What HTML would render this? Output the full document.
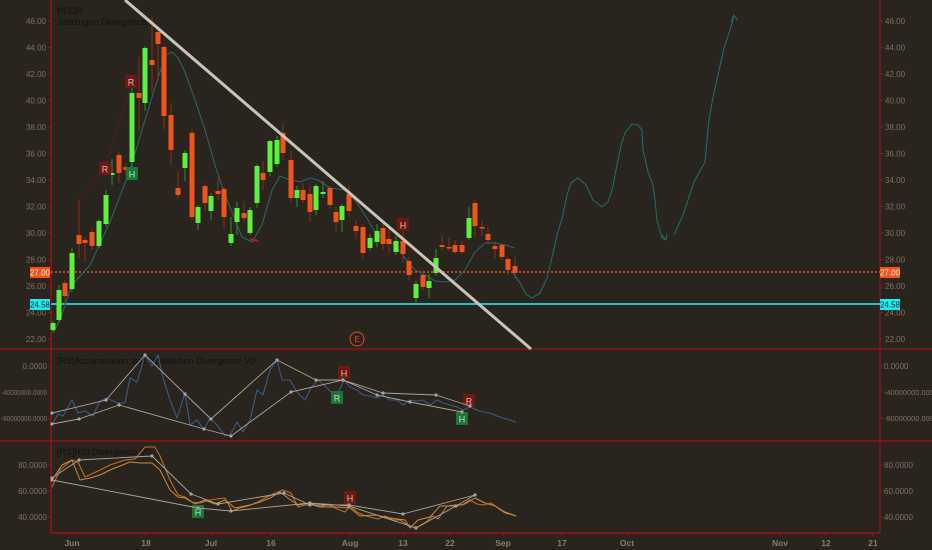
<!DOCTYPE html>
<html><head><meta charset="utf-8"><style>
html,body{margin:0;padding:0;background:#29241e;width:932px;height:550px;overflow:hidden}
svg{display:block}
text{font-family:"Liberation Sans",sans-serif}
</style></head><body>
<svg id="s" width="932" height="550" xmlns="http://www.w3.org/2000/svg">
<rect width="932" height="550" fill="#29241e"/>
<g id="g"></g>
</svg>
<script>
const NS="http://www.w3.org/2000/svg",G=document.getElementById('g');
function el(t,a,txt){const e=document.createElementNS(NS,t);for(const k in a)e.setAttribute(k,a[k]);if(txt!=null)e.textContent=txt;G.appendChild(e);return e;}
function pl(pts,st,w,extra){const a={points:pts.map(p=>p.join(',')).join(' '),fill:'none',stroke:st,'stroke-width':w,'stroke-linejoin':'round'};Object.assign(a,extra||{});return el('polyline',a);}
const AX='#9a1414',TX='#7e7262';
el('line',{x1:51,y1:0,x2:51,y2:533,stroke:AX,'stroke-width':1.5});
el('line',{x1:880,y1:0,x2:880,y2:533,stroke:AX,'stroke-width':1.2});
el('line',{x1:0,y1:349,x2:932,y2:349,stroke:AX,'stroke-width':1.2});
el('line',{x1:0,y1:441,x2:932,y2:441,stroke:AX,'stroke-width':1.2});
el('line',{x1:51,y1:533,x2:880,y2:533,stroke:AX,'stroke-width':1.5});
const pr=[46,44,42,40,38,36,34,32,30,28,26,24,22];
pr.forEach(p=>{const y=21+(46-p)*13.25;
 el('text',{x:46,y:y+3,'font-size':8,fill:TX,'text-anchor':'end'},p.toFixed(2));
 el('text',{x:885,y:y+3,'font-size':8,fill:TX},p.toFixed(2));
 el('line',{x1:48,y1:y,x2:51,y2:y,stroke:AX});el('line',{x1:880,y1:y,x2:883,y2:y,stroke:AX});});
[[366,'0.0000'],[392,'-40000000.0000'],[418,'-80000000.0000'],[465,'80.0000'],[491,'60.0000'],[517,'40.0000']].forEach(([y,t])=>{
 const long=t.length>10;
 el('text',{x:47,y:y+3,'font-size':long?7.4:8,fill:TX,'text-anchor':'end',textLength:long?46:null,lengthAdjust:'spacingAndGlyphs'},t);
 el('text',{x:884,y:y+3,'font-size':long?7.4:8,fill:TX},t);
 el('line',{x1:48,y1:y,x2:51,y2:y,stroke:AX});el('line',{x1:880,y1:y,x2:883,y2:y,stroke:AX});});
document.querySelectorAll('text').forEach(t=>{if(t.getAttribute('textLength')==='null')t.removeAttribute('textLength');});
[['Jun',72],['18',146],['Jul',211],['16',271],['Aug',350],['13',403],['22',450],['Sep',503],['17',562],['Oct',627],['Nov',780],['12',826],['21',873]].forEach(([t,x])=>{
 el('text',{x:x,y:546,'font-size':8.5,fill:'#8e7d62','text-anchor':'middle','font-weight':'bold'},t);
 el('line',{x1:x,y1:533,x2:x,y2:536,stroke:AX});});
el('text',{x:57,y:14,'font-size':9,fill:'#111'},'PDDR');
el('text',{x:57,y:25,'font-size':9,fill:'#111'},'Jeddingen Divergence');
el('text',{x:57,y:364,'font-size':9,fill:'#111'},'[RS]Accumulation and Distribution Divergence V0');
el('text',{x:57,y:455,'font-size':9,fill:'#111'},'[RS]RSI Divergence V0');
el('line',{x1:51,y1:272,x2:880,y2:272,stroke:'#e0541c','stroke-width':1.5,'stroke-dasharray':'2,2'});
el('line',{x1:51,y1:304,x2:880,y2:304,stroke:'#1ec4cc','stroke-width':2});
pl([[53,333],[60,320],[72,285],[90,265],[110,222],[130,170],[145,120],[158,78],[166,55],[172,52],[178,58],[185,72],[195,100],[205,130],[215,165],[225,195],[232,212],[242,237],[252,242],[262,225],[272,190],[280,176],[290,180],[300,182],[310,178],[318,180],[330,188],[345,190],[355,200],[365,215],[375,232],[385,240],[395,245],[405,258],[415,270],[425,275],[435,281],[445,282],[455,280],[465,270],[475,252],[485,243],[495,243],[505,245],[515,248]],'#2a6466',1.1);
el('line',{x1:250,y1:239,x2:258,y2:241,stroke:'#c01818','stroke-width':2});
pl([[79,200],[105,168],[131,85]],'#5a1a14',1);
const O='#f0541c',Gr='#5cf040';
const C=[[53,323,330,Gr,321,332],[59,290,320,Gr,285,322],[65,283,296,O,280,306],[72,253,289,Gr,248,292],[79,235,244,O,200,258],[85,240,243,O,237,262],[92,232,246,O,229,250],[99,221,246,Gr,219,248],[106,195,224,Gr,190,227],[112,173,175,Gr,159,185],[119,155,173,O,152,183],[126,167,170,O,163,175],[132,93,162,Gr,88,168],[139,93,98,O,57,132],[145,48,103,Gr,46,111],[152,60,65,O,17,93],[158,32,44,O,29,81],[164,47,116,O,45,129],[171,115,150,O,103,165],[178,188,195,O,172,198],[185,153,168,Gr,150,181],[192,133,217,O,130,220],[198,207,223,Gr,205,230],[205,186,203,O,183,210],[211,196,211,Gr,193,220],[218,191,194,O,177,200],[224,189,217,O,187,229],[231,234,243,Gr,217,246],[237,208,222,Gr,202,235],[244,213,218,O,201,222],[250,210,233,Gr,207,235],[257,166,203,Gr,164,208],[263,173,180,O,161,190],[270,141,172,Gr,140,176],[277,140,164,Gr,136,167],[283,133,153,O,124,160],[291,160,198,O,151,202],[297,190,198,Gr,186,207],[303,190,200,O,183,203],[310,194,212,O,186,222],[316,186,210,Gr,184,215],[323,192,194,Gr,181,198],[330,188,205,O,186,209],[336,212,222,O,207,231],[342,206,220,Gr,204,232],[349,194,211,O,185,217],[356,226,231,O,220,239],[363,227,253,O,224,259],[370,238,248,Gr,234,251],[377,231,242,Gr,224,247],[383,228,244,O,222,250],[389,239,244,O,226,253],[396,241,252,Gr,236,255],[403,241,254,O,230,262],[409,261,275,O,257,280],[416,284,298,Gr,281,304],[423,275,287,O,270,290],[429,281,288,Gr,274,298],[436,258,273,Gr,249,276],[442,245,247,O,235,250],[449,247,248,O,237,251],[455,245,252,O,240,254],[462,245,252,O,241,254],[469,218,238,Gr,207,240],[475,203,226,O,200,237],[482,227,228,O,221,236],[488,234,240,O,227,244],[495,246,249,O,241,259],[502,245,257,O,243,260],[508,259,270,O,257,275],[515,266,273,O,257,279]];
C.forEach(([x,t,b,c,wt,wb])=>{const wc=c==O?'#8a3412':'#3a8a2a';
 el('line',{x1:x,y1:wt,x2:x,y2:wb,stroke:wc,'stroke-width':1});
 el('rect',{x:x-2.5,y:t,width:5,height:Math.max(b-t,1.5),fill:c});});
el('line',{x1:125,y1:0,x2:531,y2:349,stroke:'#c8c4b8','stroke-width':3});
const FC='#226a66';
pl([[513,273],[520,283],[526,294],[532,298],[540,293],[547,278],[551,262],[557,235],[563,215],[567,195],[571,183],[578,178],[586,185],[593,200],[602,207],[608,202],[612,190],[617,165],[621,145],[625,133],[632,124],[638,125],[642,130],[643,150],[648,172],[653,185],[655,200],[657,220],[662,238],[666,240]],FC,1.1);
pl([[662,235],[666,240],[667,234]],FC,1.1);
pl([[674,235],[683,215],[694,182],[705,162],[707,140],[709,120],[713,97],[718,75],[724,48],[730,30],[734,16]],FC,1.1);
pl([[731,22],[734,15],[738,21]],FC,1.1);
el('rect',{x:30,y:267,width:20,height:11,fill:'#f0541c'});el('text',{x:40,y:275.5,'font-size':8,fill:'#fff3e0','text-anchor':'middle'},'27.00');
el('rect',{x:880,y:267,width:20,height:11,fill:'#f0541c'});el('text',{x:890,y:275.5,'font-size':8,fill:'#fff3e0','text-anchor':'middle'},'27.00');
el('rect',{x:30,y:299,width:20,height:11,fill:'#1eecf4'});el('text',{x:40,y:307.5,'font-size':8,fill:'#102020','text-anchor':'middle'},'24.58');
el('rect',{x:880,y:299,width:20,height:11,fill:'#1eecf4'});el('text',{x:890,y:307.5,'font-size':8,fill:'#102020','text-anchor':'middle'},'24.58');
function mk(x,y,t,green){el('rect',{x:x-6,y:y-7,width:12,height:13,fill:green?'#1e7436':'#6e1812'});el('text',{x:x,y:y+3.5,'font-size':9,fill:green?'#b8e8c0':'#e8b8b0','text-anchor':'middle'},t);}
mk(131,82,'R');mk(105,169,'R');mk(132,174,'H',1);mk(403,225,'H');
mk(344,373,'H');mk(337,398,'R',1);mk(469,401,'R');mk(462,419,'H',1);
mk(198,512,'H',1);mk(350,498,'H');
el('circle',{cx:357,cy:339,r:7,fill:'none',stroke:'#d8501c','stroke-width':1});
el('text',{x:357,y:342,'font-size':8,fill:'#d8501c','text-anchor':'middle'},'E');
pl([[52,425],[58,414],[63,416],[72,400],[78,413],[85,411],[93,416],[100,401],[107,398],[113,401],[118,403],[125,403],[130,378],[137,382],[145,355],[152,366],[158,355],[163,378],[170,400],[177,418],[185,393],[190,425],[197,420],[204,430],[210,418],[217,425],[225,436],[230,435],[237,422],[243,432],[250,420],[257,390],[263,395],[270,370],[277,360],[282,380],[290,380],[297,392],[305,400],[311,388],[318,380],[324,385],[331,392],[338,393],[344,380],[350,387],[357,390],[363,395],[370,396],[377,398],[383,395],[390,400],[397,400],[403,405],[410,400],[416,401],[423,400],[430,405],[437,400],[443,403],[450,405],[457,407],[463,410],[470,407],[477,410],[483,412],[490,413],[497,416],[503,418],[510,420],[516,422]],'#3a5a8a',1.1);
const GL='#aaa696';
const A=[[52,413],[106,400],[145,355],[185,394],[211,419],[277,360],[316,380],[343,380],[383,393],[436,395],[470,406]];
const B=[[52,424],[79,419],[119,405],[204,429],[231,436],[291,392],[343,380],[377,395],[410,402],[462,412]];
pl(A,GL,0.9);pl(B,GL,0.9);
[...A,...B].forEach(p=>el('circle',{cx:p[0],cy:p[1],r:1.6,fill:'#a8a498'}));
pl([[52,487],[60,470],[72,460],[78,462],[85,477],[98,471],[110,465],[125,460],[135,459],[145,447],[155,447],[160,456],[170,480],[178,495],[185,497],[192,502],[200,503],[210,500],[217,499],[225,498],[232,511],[240,508],[248,506],[258,502],[265,498],[275,493],[283,490],[291,493],[298,507],[305,505],[313,505],[320,507],[328,504],[337,509],[345,512],[350,506],[357,512],[363,515],[370,517],[378,519],[385,516],[393,520],[400,520],[406,524],[413,527],[418,527],[426,522],[433,516],[438,519],[447,506],[455,505],[462,505],[470,500],[477,504],[484,505],[491,503],[498,508],[505,513],[513,515],[516,516]],'#b8702a',1.1);
pl([[52,480],[62,465],[72,460],[80,480],[90,478],[100,475],[110,470],[120,466],[130,462],[140,463],[152,463],[160,470],[170,490],[178,497],[185,498],[195,504],[205,500],[215,504],[225,500],[235,508],[250,505],[260,502],[270,498],[280,492],[288,498],[298,505],[310,503],[320,507],[335,507],[350,508],[360,516],[375,515],[390,518],[405,520],[410,528],[418,520],[430,517],[440,506],[455,506],[465,504],[475,498],[485,503],[495,506],[505,512],[516,516]],'#d08a3a',1);
const D=[[52,478],[79,460],[152,456],[191,494],[218,504],[284,493],[310,505],[349,505],[403,514],[475,495]];
const E=[[52,480],[198,508],[231,511],[310,503],[349,506],[416,528],[456,506],[475,495]];
pl(D,GL,0.9);pl(E,GL,0.9);
[...D,...E].forEach(p=>el('circle',{cx:p[0],cy:p[1],r:1.6,fill:'#a8a498'}));
</script>
</body></html>
